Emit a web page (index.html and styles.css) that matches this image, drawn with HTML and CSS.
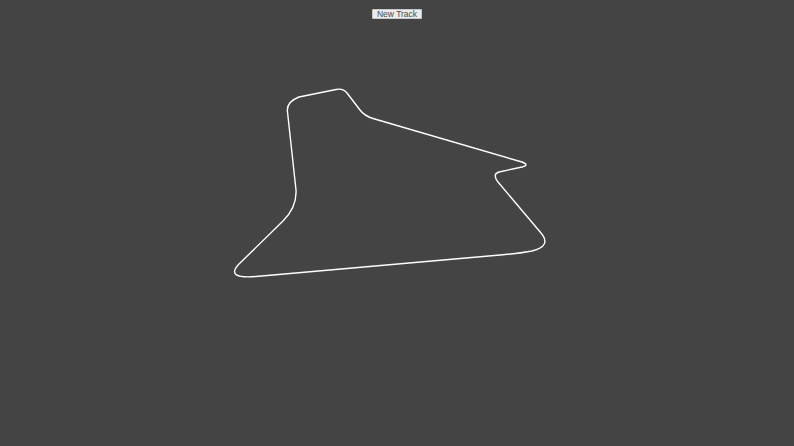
FILE: index.html
```html
<!DOCTYPE html>
<html lang="en">
<head>
  <meta charset="UTF-8">
  <meta name="viewport" content="width=device-width, initial-scale=1.0">
  <title>Track Generator</title>
  <link rel="stylesheet" href="styles.css">
</head>
<body>
  <div class="controls">
    <button class="new-track-btn">New Track</button>
  </div>

  <!-- the generated circuit, drawn as one closed line -->
  <svg class="track-canvas" viewBox="0 0 794 446" xmlns="http://www.w3.org/2000/svg">
    <path class="track-line" d="
      M 299,97
      L 336,89.5
      Q 343,88 347,93
      L 360,110
      Q 364.5,116 373,118.5
      L 522,162
      Q 530,165 522,167
      L 499,172
      Q 492,174 498,182
      L 541,233
      Q 552,246 532,251
      Q 522,253 500,255
      L 256,276.5
      Q 226,279 238,265
      L 283,221
      Q 297,207 296,190
      L 287.5,112
      Q 286,102 299,97 Z" />
  </svg>
</body>
</html>
```

FILE: styles.css
```css
html, body {
  height: 100%;
}

body {
  margin: 0;
  background-color: #444444;
  font-family: "Liberation Sans", Arial, sans-serif;
  overflow: hidden;
}

.controls {
  display: flex;
  justify-content: center;
  padding-top: 9px;
  position: relative;
  z-index: 1;
}

.new-track-btn {
  font-family: "Liberation Sans", Arial, sans-serif;
  font-size: 8.5px;
  line-height: 8px;
  white-space: nowrap;
  color: #4a4a4a;
  background-color: #ebebeb;
  border: 1px solid #c8c8c8;
  border-radius: 1px;
  padding: 0;
  width: 50px;
  height: 10px;
  cursor: pointer;
}

.new-track-btn:hover {
  background-color: #f5f5f5;
}

.track-canvas {
  position: absolute;
  top: 0;
  left: 0;
  width: 794px;
  height: 446px;
}

.track-line {
  fill: none;
  stroke: #ffffff;
  stroke-width: 1.4;
  stroke-linejoin: round;
}
```
